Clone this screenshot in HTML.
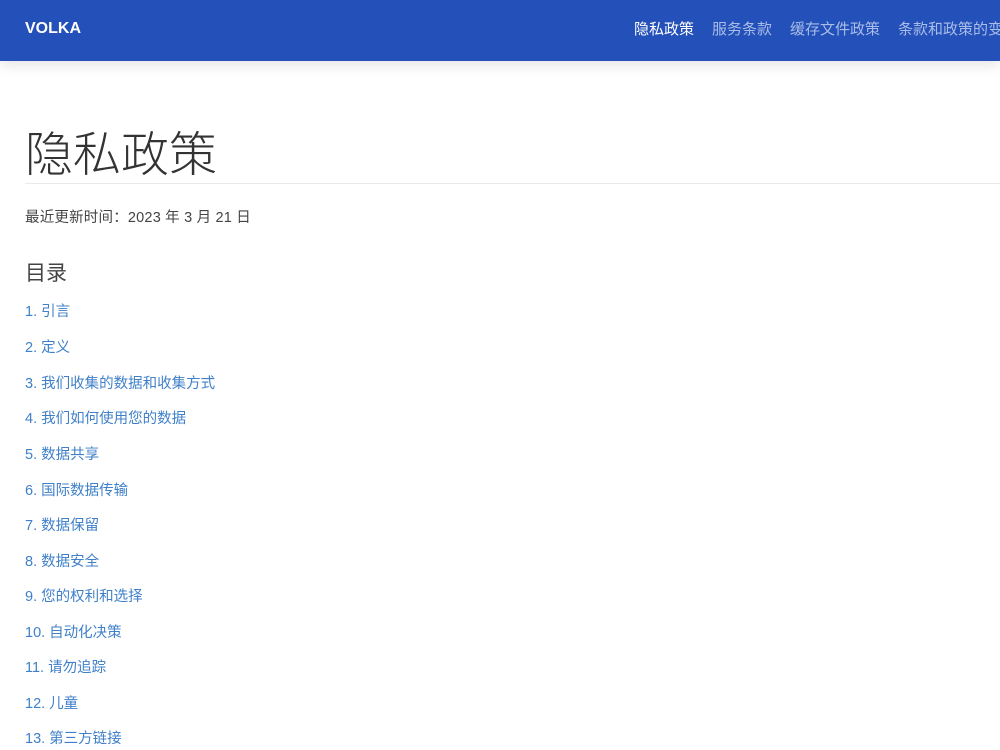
<!DOCTYPE html>
<html><head><meta charset="utf-8"><style>
*{margin:0;padding:0;box-sizing:border-box}
body{width:1000px;height:750px;overflow:hidden;background:#fff;font-family:"Liberation Sans","Noto Sans CJK SC",sans-serif;color:#333;position:relative}
.hdr{position:absolute;left:0;top:0;width:1000px;height:61px;background:#2450b9;box-shadow:0 3px 14px rgba(0,0,0,.12)}
.logo{position:absolute;left:25px;top:20px;color:#fff;font-weight:bold;font-size:16px}
.nav{position:absolute;left:634px;top:18px;white-space:nowrap;font-size:15px;color:#a9bde8}
.nav span{margin-right:18px}
.nav span.a{color:#fff}
h1{position:absolute;left:25px;top:126px;font-size:48px;font-weight:300;color:#333;line-height:60px}
.rule{position:absolute;left:25px;top:183px;width:975px;height:1px;background:#eaeaea}
.date{position:absolute;left:25px;top:206px;font-size:14.5px;letter-spacing:0.2px;color:#444}
h2{position:absolute;left:25px;top:257px;font-size:21px;font-weight:normal;color:#444}
.toc a{position:absolute;left:25px;font-size:14.5px;color:#3f80c8;text-decoration:none;white-space:nowrap}
</style></head><body>
<div class="hdr"><div class="logo">VOLKA</div>
<div class="nav"><span class="a">隐私政策</span><span>服务条款</span><span>缓存文件政策</span><span>条款和政策的变更</span></div></div>
<h1>隐私政策</h1>
<div class="rule"></div>
<div class="date">最近更新时间：2023 年 3 月 21 日</div>
<h2>目录</h2>
<div class="toc">
<a style="top:300px">1. 引言</a>
<a style="top:336px">2. 定义</a>
<a style="top:372px">3. 我们收集的数据和收集方式</a>
<a style="top:407px">4. 我们如何使用您的数据</a>
<a style="top:443px">5. 数据共享</a>
<a style="top:479px">6. 国际数据传输</a>
<a style="top:514px">7. 数据保留</a>
<a style="top:550px">8. 数据安全</a>
<a style="top:585px">9. 您的权利和选择</a>
<a style="top:621px">10. 自动化决策</a>
<a style="top:656px">11. 请勿追踪</a>
<a style="top:692px">12. 儿童</a>
<a style="top:727px">13. 第三方链接</a>
</div>
</body></html>
